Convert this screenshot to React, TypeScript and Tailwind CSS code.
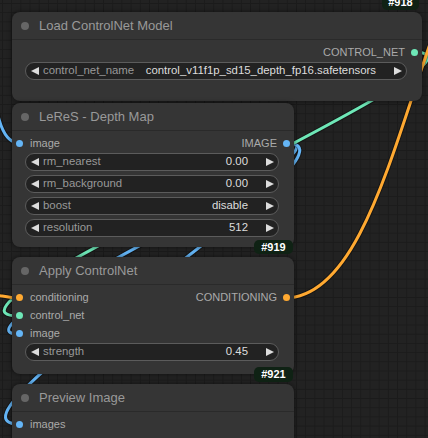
import React from 'react';

type Slot = { label: string; dot: string };

const IMAGE = 'bg-[#64B5F6]';
const COND = 'bg-[#FFA931]';
const CNET = 'bg-[#6EE7B7]';

function Dot({ dot }: { dot: string }) {
  return <span className={`block h-[7px] w-[7px] shrink-0 rounded-full ${dot}`} />;
}

function SlotRow({ input, output }: { input?: Slot; output?: Slot }) {
  return (
    <div className="flex h-[18px] items-center justify-between px-[4px] text-[11px] text-[#aaa]">
      {input ? (
        <div className="flex items-center gap-[7px]">
          <Dot dot={input.dot} />
          <span>{input.label}</span>
        </div>
      ) : (
        <span />
      )}
      {output && (
        <div className="flex items-center gap-[6px]">
          <span>{output.label}</span>
          <Dot dot={output.dot} />
        </div>
      )}
    </div>
  );
}

function Tri({ left = false }: { left?: boolean }) {
  return (
    <svg width="8" height="8" viewBox="0 0 8 8" className="shrink-0">
      <path d={left ? 'M8 0 L0 4 L8 8 Z' : 'M0 0 L8 4 L0 8 Z'} fill="#dddddd" />
    </svg>
  );
}

function Widget({ label, value }: { label: string; value: string }) {
  return (
    <div className="ml-[13px] mr-[15px] flex h-[18px] items-center rounded-full border border-[#5c5c5c] bg-[#222] pl-[5px] pr-[4px] text-[11.4px]">
      <Tri left />
      <span className="ml-[4px] whitespace-nowrap text-[#999]">{label}</span>
      <span className="ml-auto mr-[18px] whitespace-nowrap text-[#ddd]">{value}</span>
      <Tri />
    </div>
  );
}

function Node({ className, title, children }: { className: string; title: string; children: React.ReactNode }) {
  return (
    <div className={`absolute rounded-[8px] bg-[#353535] shadow-[0_0_5px_rgba(0,0,0,0.55)] ${className}`}>
      <div className="flex h-[28px] items-center gap-[10px] border-b border-[#2a2a2a] pl-[9px]">
        <span className="block h-[8px] w-[8px] rounded-full bg-[#666]" />
        <span className="text-[13px] text-[#999]">{title}</span>
      </div>
      <div className="pt-[3px]">{children}</div>
    </div>
  );
}

function Widgets({ children }: { children: React.ReactNode }) {
  return <div className="mt-[1px] flex flex-col gap-[4px]">{children}</div>;
}

function Badge({ className, id }: { className: string; id: string }) {
  return (
    <div
      className={`absolute flex items-center justify-center rounded-[5px] bg-[#0f2214] text-[11px] font-bold text-white ${className}`}
    >
      {id}
    </div>
  );
}

function Wires() {
  const links = [
    { d: 'M-10 60 C-5 110, 0 143, 19 143', c: '#64B5F6' },
    { d: 'M286 143 C369 143, -63 334, 19 334', c: '#64B5F6' },
    { d: 'M286 143 C384 143, -78 424, 19 424', c: '#64B5F6' },
    { d: 'M413 52 C530 52, -99 316, 19 316', c: '#6EE7B7' },
    { d: 'M285 298 C407 298, 420 -110, 540 -110', c: '#FFA931' },
    { d: 'M-30 292 C0 294, 5 298, 19 298', c: '#FFA931' },
  ];
  return (
    <svg className="absolute inset-0 h-full w-full overflow-visible" viewBox="0 0 428 438">
      {links.map((l, i) => (
        <g key={i} fill="none" strokeLinecap="round">
          <path d={l.d} stroke="rgba(0,0,0,0.35)" strokeWidth="5" />
          <path d={l.d} stroke={l.c} strokeWidth="3" />
        </g>
      ))}
    </svg>
  );
}

export default function App() {
  return (
    <div className="relative h-[438px] w-[428px] overflow-hidden bg-[#222] font-['Liberation_Sans',Arial,sans-serif] [background-image:linear-gradient(to_right,#1b1b1b_1px,transparent_1px),linear-gradient(to_bottom,#1b1b1b_1px,transparent_1px)] [background-position:2px_3px] [background-size:9.2px_9.2px]">
      <Wires />

      <Node className="left-[12px] top-[12px] h-[89px] w-[410px]" title="Load ControlNet Model">
        <SlotRow output={{ label: 'CONTROL_NET', dot: CNET }} />
        <Widgets>
          <Widget label="control_net_name" value="control_v11f1p_sd15_depth_fp16.safetensors" />
        </Widgets>
      </Node>

      <Node className="left-[12px] top-[103px] h-[144px] w-[282px]" title="LeReS - Depth Map">
        <SlotRow input={{ label: 'image', dot: IMAGE }} output={{ label: 'IMAGE', dot: IMAGE }} />
        <Widgets>
          <Widget label="rm_nearest" value="0.00" />
          <Widget label="rm_background" value="0.00" />
          <Widget label="boost" value="disable" />
          <Widget label="resolution" value="512" />
        </Widgets>
      </Node>

      <Node className="left-[12px] top-[257px] h-[117px] w-[282px]" title="Apply ControlNet">
        <SlotRow input={{ label: 'conditioning', dot: COND }} output={{ label: 'CONDITIONING', dot: COND }} />
        <SlotRow input={{ label: 'control_net', dot: CNET }} />
        <SlotRow input={{ label: 'image', dot: IMAGE }} />
        <Widgets>
          <Widget label="strength" value="0.45" />
        </Widgets>
      </Node>

      <Node className="left-[12px] top-[384px] h-[200px] w-[282px]" title="Preview Image">
        <SlotRow input={{ label: 'images', dot: IMAGE }} />
      </Node>

      <Badge className="left-[382px] top-[-5px] h-[15px] w-[37px]" id="#918" />
      <Badge className="left-[254px] top-[240px] h-[14px] w-[39px]" id="#919" />
      <Badge className="left-[254px] top-[367px] h-[15px] w-[39px]" id="#921" />
    </div>
  );
}
